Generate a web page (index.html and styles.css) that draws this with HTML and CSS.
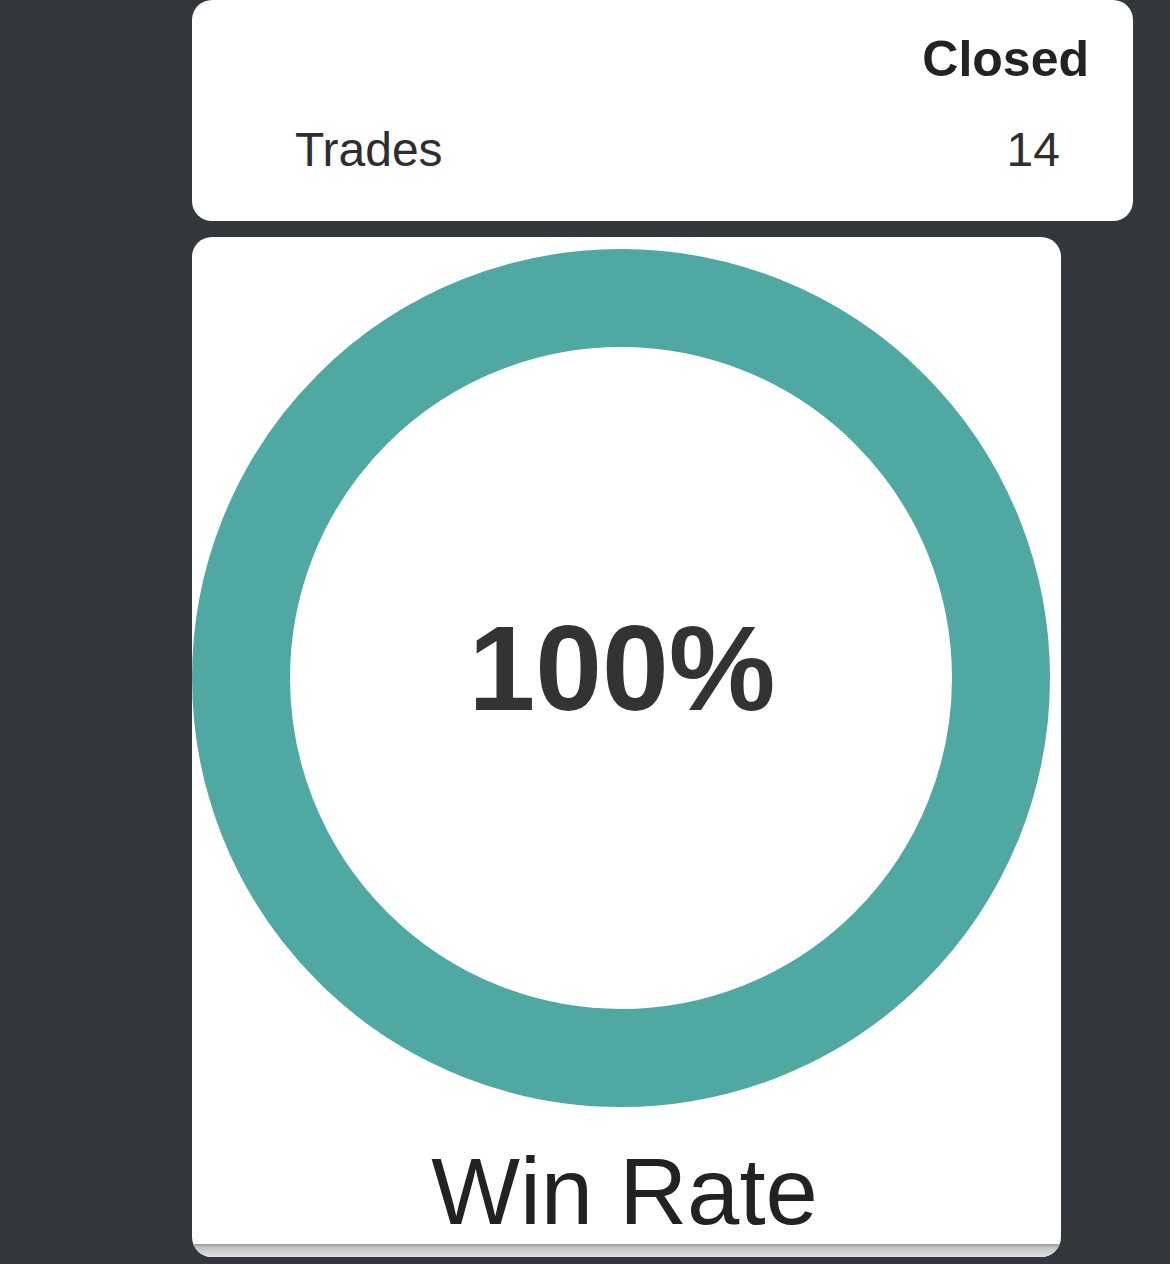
FILE: index.html
```html
<!DOCTYPE html>
<html lang="en">
<head>
<meta charset="utf-8">
<title>Win Rate</title>
<link rel="stylesheet" href="styles.css">
</head>
<body>
<main class="page">
  <section class="card summary">
    <div class="summary-head">Closed</div>
    <div class="summary-row">
      <span class="summary-label">Trades</span>
      <span class="summary-value">14</span>
    </div>
  </section>
  <section class="card rate">
    <div class="donut">
      <svg class="donut-svg" width="858" height="858" viewBox="0 0 858 858">
        <circle cx="429" cy="429" r="380" fill="none" stroke="#4fa8a1" stroke-width="98"/>
      </svg>
      <div class="donut-label">100%</div>
    </div>
    <div class="rate-title">Win Rate</div>
    <div class="rate-band"></div>
  </section>
</main>
</body>
</html>
```
FILE: styles.css
```css
html, body {
  margin: 0;
  padding: 0;
  background: #34373c;
}
body {
  font-family: "Liberation Sans", Arial, sans-serif;
  color: #2c2c2c;
}
.page {
  padding-left: 192px;
  display: flex;
  flex-direction: column;
  align-items: flex-start;
  gap: 16px;
}
.card {
  background: #ffffff;
  border-radius: 20px;
  overflow: hidden;
  box-sizing: border-box;
}
.summary {
  width: 941px;
  height: 221px;
  padding-top: 34px;
  display: flex;
  flex-direction: column;
}
.summary-head {
  font-size: 50px;
  line-height: 50px;
  font-weight: bold;
  text-align: right;
  padding-right: 44px;
  color: #222;
}
.summary-row {
  margin-top: 42px;
  display: flex;
  justify-content: space-between;
  font-size: 48px;
  line-height: 48px;
  padding-left: 103px;
  padding-right: 73px;
  color: #2e2e2e;
}
.rate {
  width: 869px;
  height: 1020px;
  display: flex;
  flex-direction: column;
  padding-top: 12px;
}
.donut {
  position: relative;
  width: 858px;
  height: 858px;
}
.donut-svg {
  display: block;
}
.donut-label {
  position: absolute;
  left: 0;
  right: 0;
  top: 359px;
  text-align: center;
  font-size: 120px;
  line-height: 120px;
  font-weight: bold;
  color: #333;
  padding-left: 2px;
}
.rate-title {
  margin-top: 38px;
  font-size: 94px;
  line-height: 94px;
  text-align: center;
  padding-right: 4px;
  color: #222;
}
.rate-band {
  margin-top: auto;
  height: 13px;
  background: linear-gradient(to bottom, #9c9c9c 0%, #c4c4c4 30%, #e4e4e4 100%);
}
```
